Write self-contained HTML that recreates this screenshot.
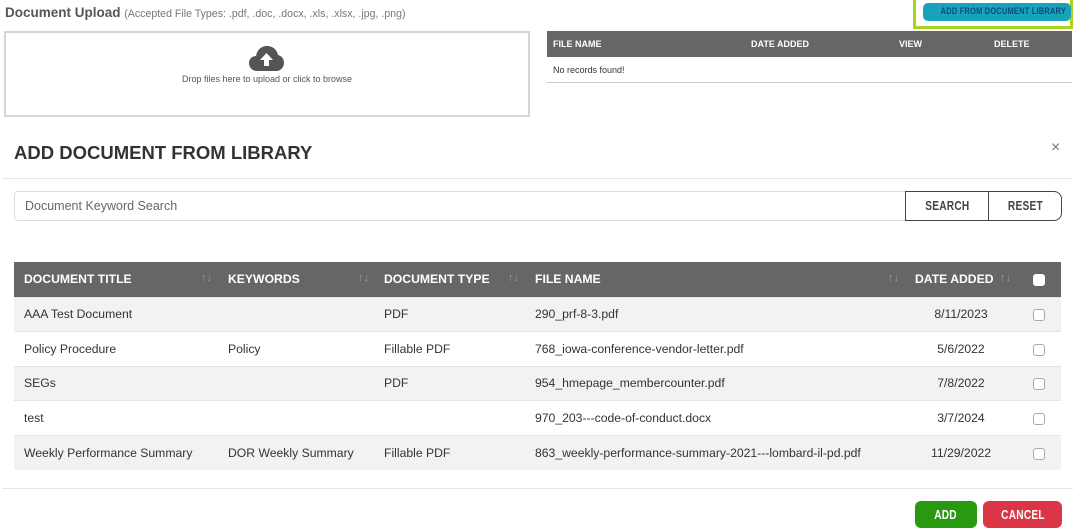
<!DOCTYPE html>
<html><head><style>
*{box-sizing:border-box;margin:0;padding:0}
body{width:1073px;height:530px;background:#fff;font-family:"Liberation Sans",Arial,sans-serif;color:#333;position:relative;overflow:hidden}
.a{position:absolute}
.cond{font-weight:bold;text-align:center}
.cond span{display:inline-block;transform:scaleX(0.78);transform-origin:center;white-space:nowrap;letter-spacing:0.3px}
table{border-collapse:collapse;table-layout:fixed}
.lt{position:absolute;left:14px;top:262px;width:1047px;font-size:12.2px}
.lt th{background:#666;color:#fff;text-align:left;font-weight:bold;height:35px;font-size:12.2px;position:relative}
.lt td{height:34.6px;color:#333;border-top:1px solid #e4e4e4}
.lt tr:nth-child(even) td{background:#f2f2f2}
.s{color:#999;font-weight:normal;position:absolute;right:6px;top:10px;font-size:11px}
.cb{display:inline-block;width:12px;height:12px;border:1px solid #aaa;border-radius:3px;background:#fff;vertical-align:middle}
</style></head><body>
<div class="a" style="left:5px;top:5px;font-size:13.5px;font-weight:bold;color:#555">Document Upload <span style="font-size:10.6px;font-weight:normal;color:#777">(Accepted File Types: .pdf, .doc, .docx, .xls, .xlsx, .jpg, .png)</span></div>
<div class="a" style="left:4px;top:31px;width:526px;height:86px;border:2px solid #d6d6d6"></div>
<svg class="a" style="left:249px;top:45px" width="35" height="27" viewBox="0 0 35 27"><path d="M8 26C3 26 0 22 0 18 0 14 3 11 7 11 8 5 12 1 18 1 24 1 28 5 29 10 33 11 35 14 35 18 35 22 32 26 27 26Z" fill="#555"/><path d="M17.5 8L11 15H15V21H20V15H24Z" fill="#fff"/></svg>
<div class="a" style="left:4px;width:526px;top:74px;text-align:center;font-size:9px;color:#555">Drop files here to upload or click to browse</div>

<div class="a" style="left:913px;top:0;width:160px;height:29px;border:3px solid #a8d51c;border-top:none"></div>
<div class="a cond" style="left:923px;top:3px;width:148px;height:18px;background:#18a3bb;border-radius:5px;color:#0b4a7a;font-size:9.5px;line-height:18px"><span>ADD FROM DOCUMENT LIBRARY</span></div>
<div class="a" style="left:547px;top:31px;width:525px;height:26px;background:#666;color:#fff;font-size:9px;font-weight:bold;line-height:26px">
<span class="a" style="left:6px">FILE NAME</span><span class="a" style="left:204px">DATE ADDED</span><span class="a" style="left:352px">VIEW</span><span class="a" style="left:447px">DELETE</span></div>
<div class="a" style="left:553px;top:65px;font-size:9px;color:#333">No records found!</div>
<div class="a" style="left:547px;top:82px;width:525px;height:1px;background:#ccc"></div>

<div class="a" style="left:14px;top:142px;font-size:18.5px;font-weight:bold;color:#333">ADD DOCUMENT FROM LIBRARY</div>
<div class="a" style="left:1051px;top:139px;font-size:16px;color:#777">×</div>
<div class="a" style="left:2px;top:178px;width:1071px;height:1px;background:#e6e6e6"></div>
<div class="a" style="left:14px;top:191px;width:892px;height:30px;border:1px solid #ddd;border-radius:4px 0 0 4px;font-size:12.5px;color:#666;line-height:28px;padding-left:10px">Document Keyword Search</div>
<div class="a cond" style="left:905px;top:191px;width:84px;height:30px;border:1.5px solid #444;font-size:13px;line-height:27px;color:#444"><span>SEARCH</span></div>
<div class="a cond" style="left:988px;top:191px;width:74px;height:30px;border:1.5px solid #444;border-radius:0 8px 8px 0;font-size:13px;line-height:27px;color:#444"><span>RESET</span></div>

<table class="lt">
<colgroup><col style="width:204px"><col style="width:157px"><col style="width:150px"><col style="width:380px"><col style="width:112px"><col></colgroup>
<tr><th style="padding-left:10px">DOCUMENT TITLE<span class="s">↑↓</span></th><th style="padding-left:10px">KEYWORDS<span class="s">↑↓</span></th><th style="padding-left:9px">DOCUMENT TYPE<span class="s">↑↓</span></th><th style="padding-left:10px">FILE NAME<span class="s">↑↓</span></th><th style="padding-left:10px">DATE ADDED<span class="s">↑↓</span></th><th style="text-align:center"><span class="cb" style="border-color:#fff"></span></th></tr>
<tr><td style="padding-left:10px">AAA Test Document</td><td style="padding-left:10px"></td><td style="padding-left:9px">PDF</td><td style="padding-left:10px">290_prf-8-3.pdf</td><td style="text-align:center">8/11/2023</td><td style="text-align:center"><span class="cb"></span></td></tr>
<tr><td style="padding-left:10px">Policy Procedure</td><td style="padding-left:10px">Policy</td><td style="padding-left:9px">Fillable PDF</td><td style="padding-left:10px">768_iowa-conference-vendor-letter.pdf</td><td style="text-align:center">5/6/2022</td><td style="text-align:center"><span class="cb"></span></td></tr>
<tr><td style="padding-left:10px">SEGs</td><td style="padding-left:10px"></td><td style="padding-left:9px">PDF</td><td style="padding-left:10px">954_hmepage_membercounter.pdf</td><td style="text-align:center">7/8/2022</td><td style="text-align:center"><span class="cb"></span></td></tr>
<tr><td style="padding-left:10px">test</td><td style="padding-left:10px"></td><td style="padding-left:9px"></td><td style="padding-left:10px">970_203---code-of-conduct.docx</td><td style="text-align:center">3/7/2024</td><td style="text-align:center"><span class="cb"></span></td></tr>
<tr><td style="padding-left:10px">Weekly Performance Summary</td><td style="padding-left:10px">DOR Weekly Summary</td><td style="padding-left:9px">Fillable PDF</td><td style="padding-left:10px">863_weekly-performance-summary-2021---lombard-il-pd.pdf</td><td style="text-align:center">11/29/2022</td><td style="text-align:center"><span class="cb"></span></td></tr>
</table>

<div class="a" style="left:2px;top:488px;width:1071px;height:1px;background:#e6e6e6"></div>
<div class="a cond" style="left:915px;top:501px;width:62px;height:27px;background:#289a10;border-radius:6px;color:#fff;font-size:13px;line-height:27px"><span>ADD</span></div>
<div class="a cond" style="left:983px;top:501px;width:79px;height:27px;background:#dc3545;border-radius:6px;color:#fff;font-size:13px;line-height:27px"><span>CANCEL</span></div>
</body></html>
